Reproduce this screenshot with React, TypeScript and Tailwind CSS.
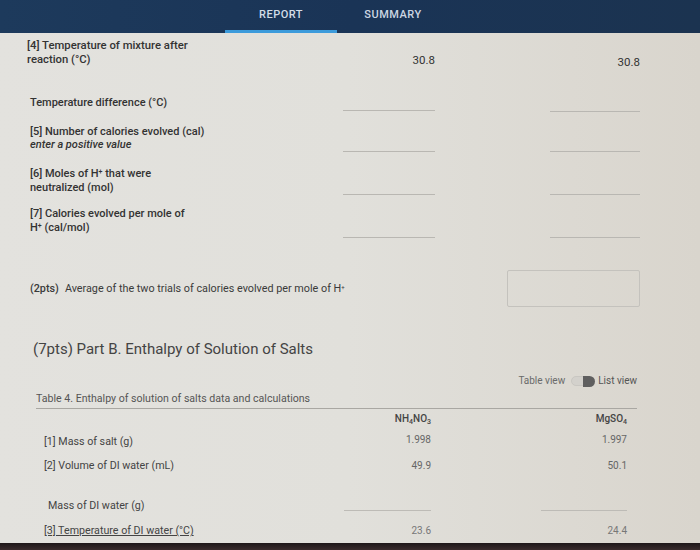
import React from "react";

const Line = ({ w, children, className = "" }: { w: string; children?: React.ReactNode; className?: string }) => (
  <div className={`${w} h-[14px] border-b border-[#b9b7b2] flex items-end justify-end leading-[14px] ${className}`}>{children}</div>
);

export default function App() {
  return (
    <div
      className="w-[700px] h-[550px] overflow-hidden relative bg-gradient-to-r from-[#e3e2de] via-[#e1e0db] to-[#d9d5cd] text-[#333]"
      style={{ fontFamily: "Roboto, 'Liberation Sans', sans-serif" }}
    >
      {/* top bar */}
      <div className="h-[33px] bg-gradient-to-r from-[#1d3a5c] via-[#1a3456] to-[#1b3350] flex items-stretch">
        <div className="w-[225px]" />
        <div className="w-[112px] flex flex-col">
          <div className="flex-1 flex items-center justify-center text-[11px] font-medium tracking-[0.5px] text-[#d3dde8]">REPORT</div>
          <div className="h-[3px] bg-[#3c9bdb]" />
        </div>
        <div className="w-[112px] flex items-center justify-center text-[11px] font-medium tracking-[0.5px] text-[#ccd6e2] pb-[3px]">SUMMARY</div>
      </div>

      <div className="pl-[27px]">
        {/* row 4 */}
        <div className="flex items-end mt-[6px]">
          <div className="w-[316px] text-[11.3px] leading-[14px] font-medium">
            [4] Temperature of mixture after
            <br />
            reaction (°C)
          </div>
          <div className="w-[92px] text-right text-[11.5px] leading-[14px]">30.8</div>
          <div className="w-[115px]" />
          <div className="w-[90px] text-right text-[11.5px] leading-[14px] translate-y-[2px]">30.8</div>
        </div>

        {/* temperature difference */}
        <div className="flex items-end mt-[29px]">
          <div className="w-[316px] pl-[3px] text-[11px] leading-[14px] font-medium">Temperature difference (°C)</div>
          <Line w="w-[92px]" className="translate-y-[1px]" />
          <div className="w-[115px]" />
          <Line w="w-[90px]" className="translate-y-[2px]" />
        </div>

        {/* row 5 */}
        <div className="flex items-end mt-[15px]">
          <div className="w-[316px] pl-[3px] text-[11px] leading-[13px] font-medium">
            [5] Number of calories evolved (cal)
            <br />
            <span className="italic">enter a positive value</span>
          </div>
          <Line w="w-[92px]" className="translate-y-[1px]" />
          <div className="w-[115px]" />
          <Line w="w-[90px]" className="translate-y-[1px]" />
        </div>

        {/* row 6 */}
        <div className="flex items-end mt-[16px]">
          <div className="w-[316px] pl-[3px] text-[11px] leading-[14px] font-medium">
            [6] Moles of H<sup className="text-[7px]">+</sup> that were
            <br />
            neutralized (mol)
          </div>
          <Line w="w-[92px]" />
          <div className="w-[115px]" />
          <Line w="w-[90px]" />
        </div>

        {/* row 7 */}
        <div className="flex items-end mt-[12px]">
          <div className="w-[316px] pl-[3px] text-[11px] leading-[14px] font-medium">
            [7] Calories evolved per mole of
            <br />
            H<sup className="text-[7px]">+</sup> (cal/mol)
          </div>
          <Line w="w-[92px]" className="translate-y-[3px]" />
          <div className="w-[115px]" />
          <Line w="w-[90px]" className="translate-y-[3px]" />
        </div>

        {/* average */}
        <div className="flex items-center mt-[35px]">
          <div className="w-[480px] pl-[3px] text-[10.8px] leading-[12px] text-[#3a3a3a]">
            <span className="font-medium">(2pts)</span>
            <span className="ml-[6px]">
              Average of the two trials of calories evolved per mole of H<sup className="text-[6px]">+</sup>
            </span>
          </div>
          <div className="w-[133px] h-[37px] border border-[#c4c2bd] rounded-[2px]" />
        </div>

        {/* Part B */}
        <div className="mt-[32px] pl-[6px] text-[15px] leading-[20px] text-[#444]">(7pts) Part B. Enthalpy of Solution of Salts</div>

        <div className="flex justify-end items-center w-[610px] mt-[16px] text-[10px] leading-[12px]">
          <span className="text-[#6a6a6a]">Table view</span>
          <div className="relative w-[25px] h-[12px] ml-[6px] mr-[2px] flex items-center">
            <div className="w-[22px] h-[10px] rounded-full bg-[#d3d1cc] border border-[#c9c7c2]" />
            <div className="absolute right-[1px] w-[12px] h-[11px] rounded-r-full rounded-l-[2px] bg-[#5f5f5f]" />
          </div>
          <span className="text-[#555]">List view</span>
        </div>

        <div className="ml-[9px] w-[601px] mt-[6px] pb-[3px] border-b border-[#a9a7a2] text-[10.6px] leading-[12px] text-[#555]">
          Table 4. Enthalpy of solution of salts data and calculations
        </div>

        <div className="text-[10.7px] text-[#444]">
          <div className="flex items-end mt-[4px]">
            <div className="w-[317px]" />
            <div className="w-[87px] text-right leading-[12px] font-medium text-[10px]">
              NH<sub className="text-[7px]">4</sub>NO<sub className="text-[7px]">3</sub>
            </div>
            <div className="w-[110px]" />
            <div className="w-[86px] text-right leading-[12px] font-medium text-[10px]">
              MgSO<sub className="text-[7px]">4</sub>
            </div>
          </div>

          <div className="flex items-center mt-[11px] leading-[12px]">
            <div className="w-[317px] pl-[17px]">[1] Mass of salt (g)</div>
            <div className="w-[87px] text-right text-[#666] text-[10px] -translate-y-[2px]">1.998</div>
            <div className="w-[110px]" />
            <div className="w-[86px] text-right text-[#666] text-[10px] -translate-y-[2px]">1.997</div>
          </div>

          <div className="flex items-center mt-[12px] leading-[12px]">
            <div className="w-[317px] pl-[17px]">[2] Volume of DI water (mL)</div>
            <div className="w-[87px] text-right text-[#666] text-[10px]">49.9</div>
            <div className="w-[110px]" />
            <div className="w-[86px] text-right text-[#666] text-[10px]">50.1</div>
          </div>

          <div className="flex items-end mt-[28px] leading-[12px]">
            <div className="w-[317px] pl-[21px]">Mass of DI water (g)</div>
            <div className="w-[87px] h-[12px] border-b border-[#bdbbb6] -translate-y-[1px]" />
            <div className="w-[110px]" />
            <div className="w-[86px] h-[12px] border-b border-[#bdbbb6] -translate-y-[1px]" />
          </div>

          <div className="flex items-end mt-[13px] leading-[12px]">
            <div className="w-[317px] pl-[17px] underline">[3] Temperature of DI water (°C)</div>
            <div className="w-[87px] text-right text-[#777] text-[10px]">23.6</div>
            <div className="w-[110px]" />
            <div className="w-[86px] text-right text-[#777] text-[10px]">24.4</div>
          </div>
        </div>
      </div>

      {/* bezel */}
      <div className="absolute left-0 right-0 bottom-0 h-[7px] bg-gradient-to-b from-[#1e1719] to-[#3a2c2d]" />
    </div>
  );
}
